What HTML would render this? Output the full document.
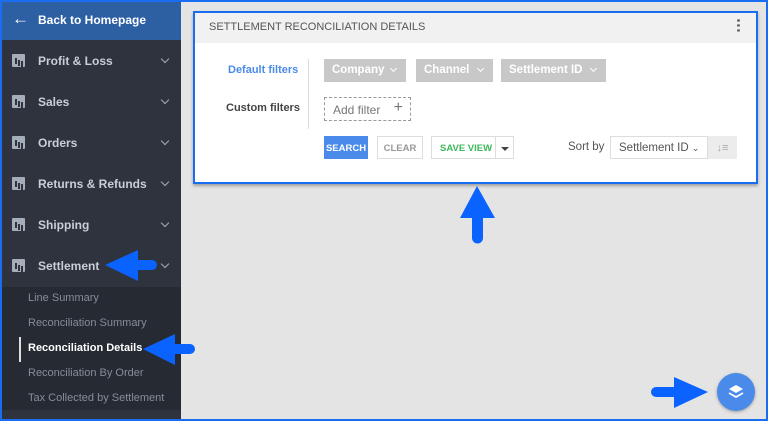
<!DOCTYPE html><html><head><style>
*{box-sizing:border-box;margin:0;padding:0}
body{width:768px;height:421px;overflow:hidden;font-family:"Liberation Sans",sans-serif;background:#e4e4e4;position:relative}
.frame{position:absolute;inset:0;border:2px solid #1a6cf0;pointer-events:none;z-index:20}
.side{position:absolute;left:0;top:0;width:181px;height:421px;background:#2e333d}
.back{height:40px;background:#2d5fa3;color:#fff;font-weight:bold;font-size:12px;display:flex;align-items:center;padding-left:38px;position:relative}
.item{position:absolute;left:0;width:181px;height:41px;color:#c9ced8;font-size:12px;font-weight:bold;display:flex;align-items:center;padding-left:38px}
.ic{position:absolute;left:12px;width:13px;height:13px;background:#a6adba;border-radius:1px}
.ic:after{content:"";position:absolute;left:3px;bottom:3px;width:2px;height:6px;background:#2e333d;box-shadow:3px 2px 0 #2e333d,6px 3px 0 #2e333d}
.chev{position:absolute;left:162px;width:6px;height:6px;border-right:1.5px solid #a6adba;border-bottom:1.5px solid #a6adba;transform:rotate(45deg);margin-top:-3px}
.sub{position:absolute;left:0;top:287px;width:181px;height:123px;background:#262a33}
.sub div{position:absolute;left:28px;font-size:11px;color:#868d99}
.card{position:absolute;left:193px;top:11px;width:565px;height:173px;border:2px solid #1a6cf0;background:#fff;box-shadow:0 2px 3px rgba(0,0,0,.3)}
.ch{height:30px;background:#f1f1f1;font-size:11px;color:#555;padding:8px 0 0 14px}
.abs{position:absolute}
.chip{position:absolute;top:46px;height:23px;background:#c8c8c8;color:#fff;font-size:11.5px;font-weight:bold;padding:5px 0 0 8px}
.chip i{position:absolute;right:10px;top:7px;width:5px;height:5px;border-right:1.5px solid #fff;border-bottom:1.5px solid #fff;transform:rotate(45deg)}
.btn{position:absolute;top:123px;height:23px;font-size:9.5px;font-weight:bold;text-align:center;line-height:23px;border:1px solid #ddd}
</style></head><body>
<div class="side">
<div class="back"><span style="position:absolute;left:12px;top:9px;font-size:17px;font-weight:normal">&#8592;</span>Back to Homepage</div>
<div class="item" style="top:40px"><span class="ic"></span>Profit &amp; Loss<span class="chev"></span></div>
<div class="item" style="top:81px"><span class="ic"></span>Sales<span class="chev"></span></div>
<div class="item" style="top:122px"><span class="ic"></span>Orders<span class="chev"></span></div>
<div class="item" style="top:163px"><span class="ic"></span>Returns &amp; Refunds<span class="chev"></span></div>
<div class="item" style="top:204px"><span class="ic"></span>Shipping<span class="chev"></span></div>
<div class="item" style="top:245px"><span class="ic"></span>Settlement<span class="chev"></span></div>
<div class="sub">
<div style="top:5px">Line Summary</div>
<div style="top:30px">Reconciliation Summary</div>
<div style="top:55px;color:#fff;font-weight:bold">Reconciliation Details</div>
<span style="position:absolute;left:19px;top:50px;width:2px;height:25px;background:#ddd"></span>
<div style="top:80px">Reconciliation By Order</div>
<div style="top:105px">Tax Collected by Settlement</div>
</div>
</div>
<div class="card">
<div class="ch">SETTLEMENT RECONCILIATION DETAILS<span style="position:absolute;right:9px;top:5px;font-size:15px;font-weight:bold;color:#555;writing-mode:vertical-rl">&#8943;</span></div>
<div class="abs" style="left:33px;top:51px;font-size:11px;font-weight:bold;color:#4a8ae8">Default filters</div>
<div class="abs" style="left:31px;top:89px;font-size:11px;font-weight:bold;color:#444">Custom filters</div>
<div class="abs" style="left:113px;top:46px;width:1px;height:70px;background:#ddd"></div>
<div class="chip" style="left:129px;width:82px">Company<i></i></div>
<div class="chip" style="left:221px;width:77px">Channel<i></i></div>
<div class="chip" style="left:306px;width:105px">Settlement ID<i></i></div>
<div class="abs" style="left:129px;top:84px;width:87px;height:24px;border:1px dashed #999;font-size:12px;color:#777;padding:5px 0 0 8px">Add filter <span style="position:absolute;right:7px;top:1px;font-size:16px">+</span></div>
<div class="btn" style="left:129px;width:44px;background:#4a8ae8;color:#fff;border-color:#4a8ae8">SEARCH</div>
<div class="btn" style="left:182px;width:46px;color:#999">CLEAR</div>
<div class="btn" style="left:236px;width:83px;color:#3cb95a;text-align:left;padding-left:8px">SAVE VIEW<span style="position:absolute;left:63px;top:0;width:1px;height:21px;background:#ddd"></span><span style="position:absolute;left:69px;top:10px;border:4px solid transparent;border-top:4px solid #444"></span></div>
<div class="abs" style="left:373px;top:128px;font-size:11.5px;color:#555">Sort by</div>
<div class="btn" style="left:415px;width:98px;font-weight:normal;font-size:11.5px;color:#555;text-align:left;padding-left:8px">Settlement ID <span style="font-size:9px">&#8964;</span></div>
<div class="btn" style="left:513px;width:29px;background:#ececec;border-color:#ececec;color:#aaa;font-weight:normal;font-size:11px">&#8595;&#8801;</div>
</div>
<div class="abs" style="left:717px;top:373px;width:38px;height:38px;border-radius:50%;background:#4a8ae8;box-shadow:0 1px 3px rgba(0,0,0,.3)">
<svg width="38" height="38"><path d="M19 12l7 4-7 4-7-4z" fill="#fff"/><path d="M12 20l7 4 7-4" fill="none" stroke="#fff" stroke-width="1.8"/></svg></div>
<svg class="abs" style="left:0;top:0;z-index:10" width="768" height="421" fill="#0a62ff">
<path d="M477 186L495 218H483V238a5 5 0 0 1-11 0V218H460z"/>
<path d="M105 265L138 250V260H152a5 5 0 0 1 0 10H138V281z"/>
<path d="M143 349L175 334V344H190a5 5 0 0 1 0 10H175V365z"/>
<path d="M708 392L674 377V387H656a5 5 0 0 0 0 10H674V408z"/>
</svg>
<div class="frame"></div>
</body></html>
